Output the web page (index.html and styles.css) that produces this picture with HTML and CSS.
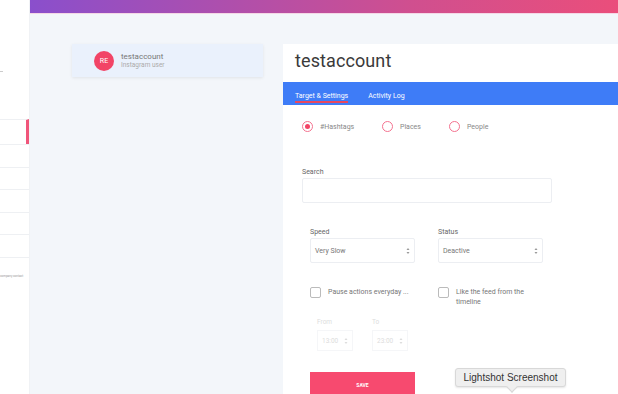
FILE: index.html
```html
<!DOCTYPE html>
<html>
<head>
<meta charset="utf-8">
<link rel="stylesheet" href="styles.css">
</head>
<body>
<div class="app">
  <aside class="sidebar">
    <div class="side-mark"></div>
    <ul class="side-list">
      <li class="active"></li>
      <li></li>
      <li></li>
      <li></li>
      <li></li>
      <li></li>
    </ul>
    <div class="side-foot">company contact</div>
  </aside>
  <main class="main">
    <div class="topbar"></div>
    <div class="content">
      <div class="left-col">
        <div class="profile">
          <div class="avatar">RE</div>
          <div class="pinfo">
            <div class="pname">testaccount</div>
            <div class="psub">Instagram user</div>
          </div>
        </div>
      </div>
      <section class="panel">
        <h1 class="title">testaccount</h1>
        <nav class="tabs">
          <span class="tab active">Target &amp; Settings</span>
          <span class="tab">Activity Log</span>
        </nav>
        <div class="body">
          <div class="radios">
            <label class="radio"><span class="circle on"></span>#Hashtags</label>
            <label class="radio"><span class="circle"></span>Places</label>
            <label class="radio"><span class="circle"></span>People</label>
          </div>
          <div class="field search">
            <div class="lbl">Search</div>
            <div class="input"></div>
          </div>
          <div class="row2">
            <div class="field">
              <div class="lbl">Speed</div>
              <div class="select"><span>Very Slow</span><svg class="arr" viewBox="0 0 4 8" width="4" height="8"><path d="M0.5 3 L2 1 L3.5 3 Z M0.5 5 L2 7 L3.5 5 Z" fill="#999"/></svg></div>
            </div>
            <div class="field">
              <div class="lbl">Status</div>
              <div class="select"><span>Deactive</span><svg class="arr" viewBox="0 0 4 8" width="4" height="8"><path d="M0.5 3 L2 1 L3.5 3 Z M0.5 5 L2 7 L3.5 5 Z" fill="#999"/></svg></div>
            </div>
          </div>
          <div class="row2 checks">
            <label class="check"><span class="box"></span><span>Pause actions everyday ...</span></label>
            <label class="check"><span class="box"></span><span>Like the feed from the<br>timeline</span></label>
          </div>
          <div class="times">
            <div class="tfield">
              <div class="tlbl">From</div>
              <div class="tsel"><span>13:00</span><svg class="arr" viewBox="0 0 4 8" width="4" height="8"><path d="M0.5 3 L2 1 L3.5 3 Z M0.5 5 L2 7 L3.5 5 Z" fill="#ddd"/></svg></div>
            </div>
            <div class="tfield">
              <div class="tlbl">To</div>
              <div class="tsel"><span>23:00</span><svg class="arr" viewBox="0 0 4 8" width="4" height="8"><path d="M0.5 3 L2 1 L3.5 3 Z M0.5 5 L2 7 L3.5 5 Z" fill="#ddd"/></svg></div>
            </div>
          </div>
          <div class="actions">
            <button class="save">SAVE</button>
            <div class="tooltip">Lightshot Screenshot</div>
          </div>
        </div>
      </section>
    </div>
  </main>
</div>
</body>
</html>
```
FILE: styles.css
```css
* { box-sizing: border-box; margin: 0; padding: 0; }
html, body { width: 618px; height: 394px; overflow: hidden; }
body { font-family: Roboto, "Open Sans", Arial, sans-serif; background: #f3f6fa; color: #555; }
.app { display: flex; height: 394px; }
.sidebar { width: 30px; flex: none; background: #fff; position: relative; padding-top: 119px; border-right: 1px solid #f0f2f5; }
.side-mark { position: absolute; left: 0; top: 71px; width: 3px; height: 1px; background: #ccc; }
.side-list { list-style: none; }
.side-list li { height: 22.5px; border-top: 1px solid #eef0f3; }
.side-list li.active { height: 25px; border-right: 3px solid #f0557a; }
.side-foot { font-size: 3px; color: #999; white-space: nowrap; overflow: hidden; padding-top: 16px; border-top: 1px solid #eef0f3; }
.main { flex: 1; display: flex; flex-direction: column; }
.topbar { height: 14px; flex: none; background: linear-gradient(90deg, #8a4fcc 0%, #b04fab 35%, #d04f8f 65%, #ea4e7b 100%); border-bottom: 1px solid #f4d8e6; }
.content { flex: 1; display: flex; padding: 30px 0 0 42px; gap: 20px; }
.left-col { width: 191px; flex: none; }
.profile { height: 33px; background: #eaf1fc; display: flex; align-items: center; padding-left: 22px; gap: 7px; box-shadow: 0 1px 3px rgba(0,0,0,0.08); }
.avatar { width: 20px; height: 20px; border-radius: 50%; background: #f24466; color: #fff; font-size: 7px; display: flex; align-items: center; justify-content: center; }
.pname { font-size: 8px; color: #777; line-height: 9px; }
.psub { font-size: 6.5px; color: #aaa; line-height: 8px; }
.panel { flex: 1; background: #fff; display: flex; flex-direction: column; }
.title { font-size: 18px; font-weight: 400; color: #3a3a3a; height: 38px; line-height: 34px; padding-left: 12px; letter-spacing: 0.1px; }
.tabs { height: 23px; background: #3e7cf7; display: flex; gap: 20px; padding-left: 12px; }
.tab { font-size: 7px; color: #fff; line-height: 28px; height: 21px; }
.tab.active { border-bottom: 2px solid #e8485e; }
.body { padding: 16px 0 0 19px; }
.radios { display: flex; gap: 0; font-size: 7px; color: #888; }
.radio { display: flex; align-items: center; gap: 7px; }
.radio:nth-child(1) { width: 80px; }
.radio:nth-child(2) { width: 67px; }
.circle { width: 11px; height: 11px; border-radius: 50%; border: 1px solid #f4728f; display: inline-flex; align-items: center; justify-content: center; }
.circle.on::after { content: ""; width: 5px; height: 5px; border-radius: 50%; background: #f24466; }
.lbl { font-size: 7px; color: #666; margin-bottom: 2px; }
.search { margin-top: 36px; width: 250px; }
.input { height: 25px; border: 1px solid #eceef2; border-radius: 2px; }
.row2 { display: flex; gap: 23px; padding-left: 8px; margin-top: 25px; }
.row2 .field { width: 105px; }
.select { height: 25px; border: 1px solid #eceef2; border-radius: 2px; display: flex; align-items: center; justify-content: space-between; padding: 0 4px 0 4px; font-size: 7px; color: #777; }
.arr { flex: none; }
.checks { margin-top: 24px; align-items: flex-start; }
.check { width: 105px; display: flex; gap: 7px; font-size: 7px; color: #777; line-height: 10px; }
.check:first-child { width: 105px; }
.check:last-child { width: 120px; }
.box { width: 11px; height: 11px; flex: none; border: 1px solid #bbb; border-radius: 2px; }
.times { display: flex; gap: 19px; padding-left: 15px; margin-top: 11px; }
.tlbl { font-size: 6.5px; color: #ddd; margin-bottom: 4px; }
.tsel { width: 36px; height: 21px; border: 1px solid #f5f6f8; display: flex; align-items: center; justify-content: space-between; padding: 0 4px; font-size: 6.5px; color: #ddd; }
.actions { display: flex; padding-left: 8px; margin-top: 21px; position: relative; }
.save { width: 105px; height: 26px; background: #f74a6f; border: none; color: #fff; font-family: inherit; font-size: 5px; font-weight: 700; }
.tooltip { position: absolute; left: 153px; top: -4px; width: 111px; height: 19px; background: #efefef; border: 1px solid #d8d8d8; border-radius: 3px; font-size: 10px; color: #333; display: flex; align-items: center; justify-content: center; font-family: "Liberation Sans", Arial, sans-serif; box-shadow: 0 1px 2px rgba(0,0,0,0.1); }
.tooltip::after { content: ""; position: absolute; left: 52px; bottom: -5px; width: 7px; height: 7px; background: #efefef; border-right: 1px solid #d8d8d8; border-bottom: 1px solid #d8d8d8; transform: rotate(45deg); }
```
